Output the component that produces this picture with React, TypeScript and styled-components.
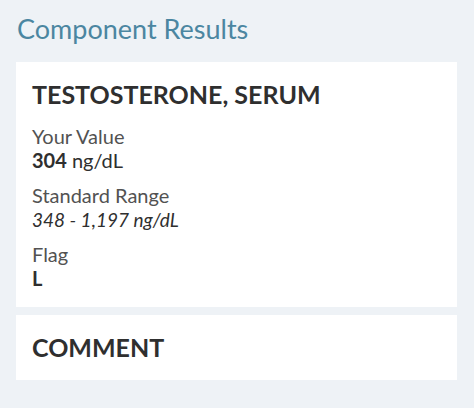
import React from 'react';
import styled, { createGlobalStyle } from 'styled-components';

const GlobalStyle = createGlobalStyle`
  html, body {
    margin: 0;
    padding: 0;
    background: #eef2f6;
  }
  body {
    font-family: Lato, 'Noto Sans', sans-serif;
  }
`;

const Page = styled.div`
  width: 474px;
  height: 408px;
  overflow: hidden;
  background: #eef2f6;
  padding: 10px 16px 0 16px;
  box-sizing: border-box;
  display: flex;
  flex-direction: column;
`;

const PageTitle = styled.h1`
  margin: 0 0 14px 1px;
  font-size: 27px;
  line-height: 38px;
  font-weight: 400;
  color: #4b86a1;
`;

const Card = styled.section<{ $compact?: boolean }>`
  width: 441px;
  background: #ffffff;
  padding: ${(p) => (p.$compact ? '16px 16px 17px' : '16px 16px 16px')};
  box-sizing: border-box;
  margin-bottom: 8px;
`;

const CardTitle = styled.h2`
  margin: 0 0 14px 0;
  font-size: 25px;
  line-height: 32px;
  font-weight: 700;
  color: #2f2f2f;
  &:last-child {
    margin-bottom: 0;
  }
`;

const Field = styled.div`
  margin-bottom: 10px;
  &:last-child {
    margin-bottom: 0;
  }
`;

const Label = styled.div`
  font-size: 20px;
  line-height: 24px;
  color: #525252;
`;

const Value = styled.div<{ $italic?: boolean }>`
  font-size: ${(p) => (p.$italic ? '19px' : '20px')};
  line-height: 25px;
  color: #2f2f2f;
  font-style: ${(p) => (p.$italic ? 'italic' : 'normal')};
`;

const Strong = styled.b`
  font-weight: 700;
`;

export default function App() {
  return (
    <>
      <GlobalStyle />
      <Page>
        <PageTitle>Component Results</PageTitle>
        <Card>
          <CardTitle>TESTOSTERONE, SERUM</CardTitle>
          <Field>
            <Label>Your Value</Label>
            <Value>
              <Strong>304</Strong> ng/dL
            </Value>
          </Field>
          <Field>
            <Label>Standard Range</Label>
            <Value $italic>348 - 1,197 ng/dL</Value>
          </Field>
          <Field>
            <Label>Flag</Label>
            <Value>
              <Strong>L</Strong>
            </Value>
          </Field>
        </Card>
        <Card $compact>
          <CardTitle>COMMENT</CardTitle>
        </Card>
      </Page>
    </>
  );
}
